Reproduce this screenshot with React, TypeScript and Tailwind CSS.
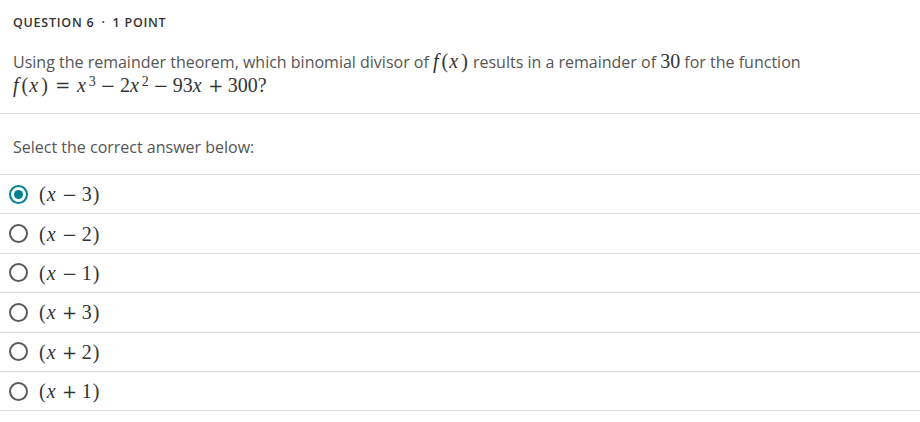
import React from "react";

const M = ({ children }: { children: React.ReactNode }) => (
  <span className="text-[20px] leading-[1] text-[#333]" style={{ fontFamily: '"Liberation Serif", "DejaVu Serif", serif' }}>
    {children}
  </span>
);
const I = ({ children }: { children: React.ReactNode }) => <i className="italic pr-[2px]">{children}</i>;
const Sup = ({ children }: { children: React.ReactNode }) => (
  <sup className="relative -top-[0.45em] text-[14px] leading-[1] align-baseline pl-[1px]">{children}</sup>
);
const Op = ({ children, rel }: { children: React.ReactNode; rel?: boolean }) => (
  <span
    className={rel ? "mx-[6.5px] text-[18px] leading-[1]" : "mx-[4.5px] text-[18px] leading-[1]"}
    style={{ fontFamily: '"DejaVu Serif", serif' }}
  >
    {children}
  </span>
);
const P = ({ children }: { children: React.ReactNode }) => <span className="px-[1px]">{children}</span>;

function Radio({ checked }: { checked?: boolean }) {
  if (checked) {
    return (
      <span className="flex h-[19px] w-[19px] items-center justify-center rounded-full border-[2.5px] border-[#00838f]">
        <span className="h-[9px] w-[9px] rounded-full bg-[#00838f]" />
      </span>
    );
  }
  return <span className="block h-[19px] w-[19px] rounded-full border-2 border-[#5a5a5a]" />;
}

const options: { sign: string; n: string; checked?: boolean }[] = [
  { sign: "−", n: "3", checked: true },
  { sign: "−", n: "2" },
  { sign: "−", n: "1" },
  { sign: "+", n: "3" },
  { sign: "+", n: "2" },
  { sign: "+", n: "1" },
];

export default function App() {
  return (
    <div className="w-[920px] h-[422px] bg-white" style={{ fontFamily: '"Open Sans", sans-serif' }}>
      <div className="px-[13px] pt-[13px] h-[20px] box-content text-[12.5px] leading-[20px] font-semibold tracking-[0.06em] text-[#333]">
        QUESTION 6 <span className="mx-[3px]">·</span> 1 POINT
      </div>
      <div className="px-[13px] pt-[17px] pb-[15px] text-[16px] leading-[24px] text-[#555] border-b border-[#dcdcdc]">
        <div className="h-[24px]">
          Using the remainder theorem, which binomial divisor of{" "}
          <M>
            <I>f</I>
            <P>(</P>
            <I>x</I>
            <P>)</P>
          </M>{" "}
          results in a remainder of <M>30</M> for the function
        </div>
        <div className="h-[24px]">
          <M>
            <I>f</I>
            <P>(</P>
            <I>x</I>
            <P>)</P>
            <Op rel>=</Op>
            <I>x</I>
            <Sup>3</Sup>
            <Op>−</Op>2<I>x</I>
            <Sup>2</Sup>
            <Op>−</Op>93<I>x</I>
            <Op>+</Op>300?
          </M>
        </div>
      </div>
      <div className="px-[13px] pt-[21px] pb-[15px] text-[16px] leading-[24px] text-[#555] border-b border-[#dcdcdc]">
        Select the correct answer below:
      </div>
      {options.map((o, i) => (
        <div key={i} className="flex h-[39.4px] items-center gap-[10px] pl-[9px] border-b border-[#dcdcdc]">
          <Radio checked={o.checked} />
          <M>
            <P>(</P>
            <I>x</I>
            <Op>{o.sign}</Op>
            {o.n}
            <P>)</P>
          </M>
        </div>
      ))}
    </div>
  );
}
